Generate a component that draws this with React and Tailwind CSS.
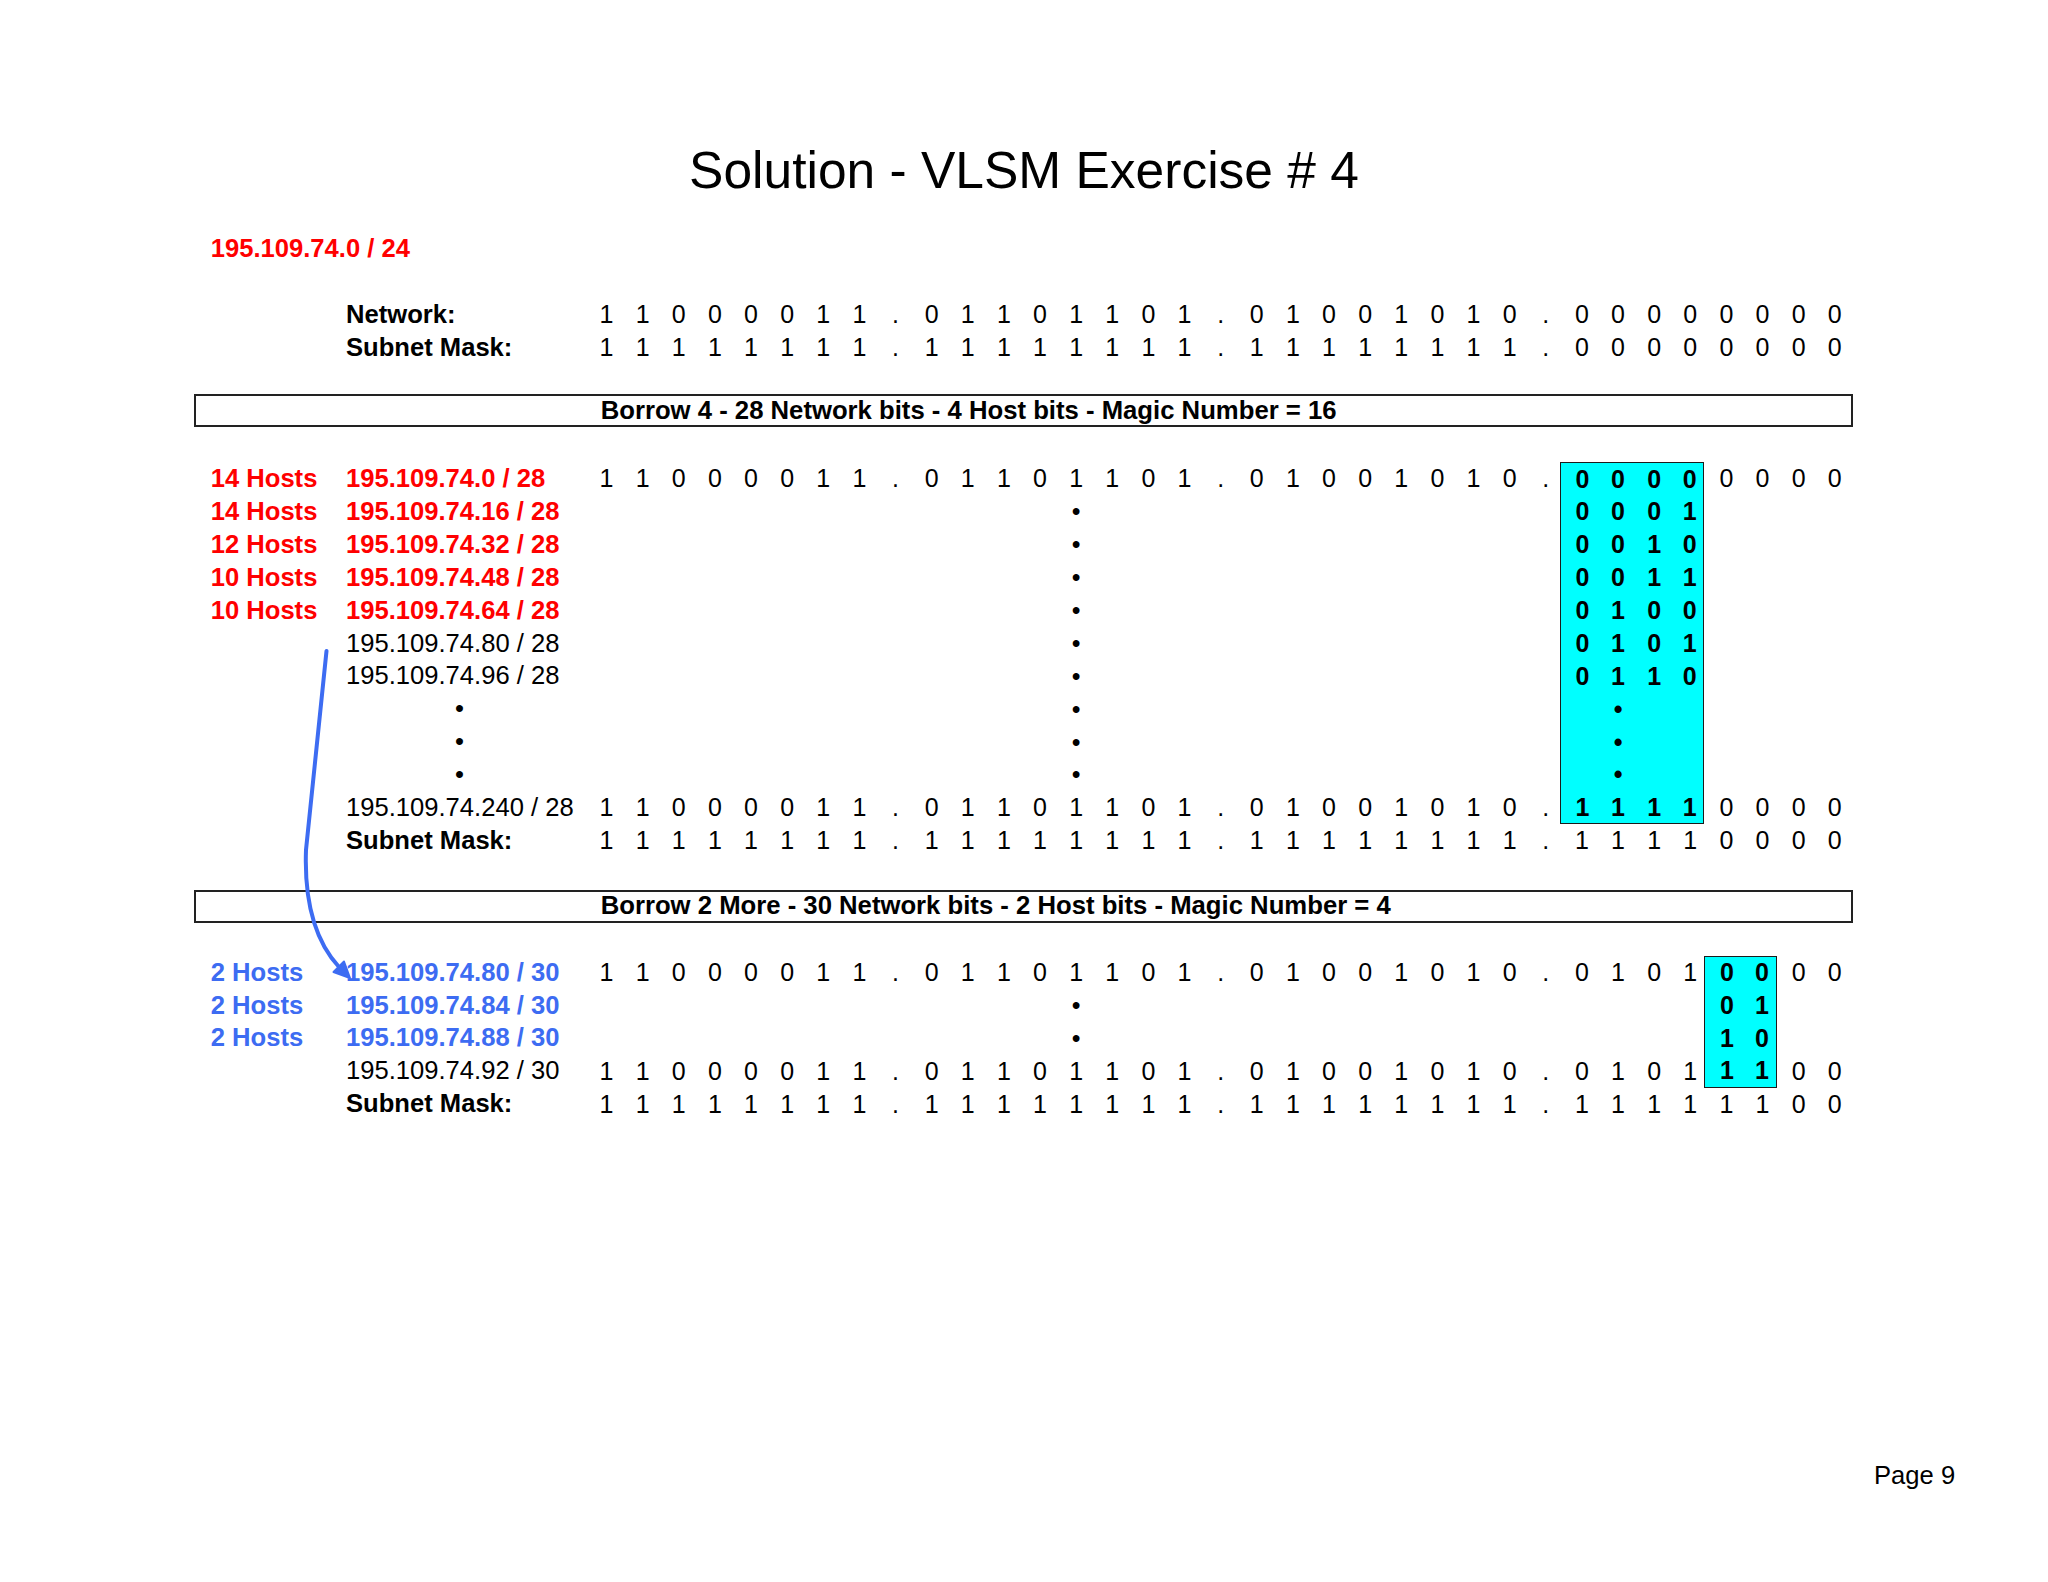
import React from 'react';
import clsx from 'clsx';

const RED = 'text-[#ff0000]';
const BLUE = 'text-[#3d6cf2]';

function full(octets) {
  const cells = [];
  octets.forEach((o, i) => {
    for (const c of o) cells.push(c);
    if (i < 3) cells.push('.');
  });
  return cells;
}

function partial(start, pattern) {
  const cells = Array(35).fill('');
  cells[13] = '•';
  for (let k = 0; k < pattern.length; k++) cells[start + k] = pattern[k];
  return cells;
}

function Row({ hosts, hostsClass, addr, addrClass, cells, box, r }) {
  return (
    <div className="flex h-[32.9px] items-center pl-[210.7px] leading-none">
      <div className={clsx('w-[135.3px] font-bold whitespace-nowrap', hostsClass)}>{hosts}</div>
      <div className={clsx('w-[238.5px] whitespace-nowrap', addrClass)}>{addr}</div>
      <div className="grid h-full grid-cols-[repeat(35,36.13px)] text-[25px]">
        {cells.map((c, i) => {
          const inBox = box && i >= box.c0 && i <= box.c1 && r >= box.r0 && r <= box.r1;
          return (
            <div
              key={i}
              className={clsx(
                'flex h-full items-center justify-center pl-2',
                inBox && 'bg-[#00ffff] font-bold border-[#1c1c1c]',
                inBox && i === box.c0 && 'border-l-[1.5px]',
                inBox && i === box.c1 && 'border-r-[1.5px]',
                inBox && r === box.r0 && 'border-t-[1.5px]',
                inBox && r === box.r1 && 'border-b-[1.5px]'
              )}
            >
              {c}
            </div>
          );
        })}
      </div>
    </div>
  );
}

function Banner({ text, className }) {
  return (
    <div
      className={clsx(
        'ml-[194px] flex h-[33px] w-[1659px] items-center border-2 border-[#222] pl-[404.7px] text-[25.7px] font-bold leading-none',
        className
      )}
    >
      {text}
    </div>
  );
}

const BOX2 = { c0: 27, c1: 30, r0: 0, r1: 10 };
const BOX3 = { c0: 31, c1: 32, r0: 0, r1: 3 };

const base = ['11000011', '01101101', '01001010'];
const mask = ['11111111', '11111111', '11111111'];

const sec2 = [
  { hosts: '14 Hosts', hostsClass: RED, addr: '195.109.74.0 / 28', addrClass: clsx('font-bold', RED), cells: full([...base, '00000000']) },
  { hosts: '14 Hosts', hostsClass: RED, addr: '195.109.74.16 / 28', addrClass: clsx('font-bold', RED), cells: partial(27, '0001') },
  { hosts: '12 Hosts', hostsClass: RED, addr: '195.109.74.32 / 28', addrClass: clsx('font-bold', RED), cells: partial(27, '0010') },
  { hosts: '10 Hosts', hostsClass: RED, addr: '195.109.74.48 / 28', addrClass: clsx('font-bold', RED), cells: partial(27, '0011') },
  { hosts: '10 Hosts', hostsClass: RED, addr: '195.109.74.64 / 28', addrClass: clsx('font-bold', RED), cells: partial(27, '0100') },
  { hosts: '', addr: '195.109.74.80 / 28', cells: partial(27, '0101') },
  { hosts: '', addr: '195.109.74.96 / 28', cells: partial(27, '0110') },
  { hosts: '', addr: '•', addrClass: 'pl-[109px]', cells: partial(28, '•') },
  { hosts: '', addr: '•', addrClass: 'pl-[109px]', cells: partial(28, '•') },
  { hosts: '', addr: '•', addrClass: 'pl-[109px]', cells: partial(28, '•') },
  { hosts: '', addr: '195.109.74.240 / 28', cells: full([...base, '11110000']) },
  { hosts: '', addr: 'Subnet Mask:', addrClass: 'font-bold', cells: full([...mask, '11110000']) },
];

const sec3 = [
  { hosts: '2 Hosts', hostsClass: BLUE, addr: '195.109.74.80 / 30', addrClass: clsx('font-bold', BLUE), cells: full([...base, '01010000']) },
  { hosts: '2 Hosts', hostsClass: BLUE, addr: '195.109.74.84 / 30', addrClass: clsx('font-bold', BLUE), cells: partial(31, '01') },
  { hosts: '2 Hosts', hostsClass: BLUE, addr: '195.109.74.88 / 30', addrClass: clsx('font-bold', BLUE), cells: partial(31, '10') },
  { hosts: '', addr: '195.109.74.92 / 30', cells: full([...base, '01011100']) },
  { hosts: '', addr: 'Subnet Mask:', addrClass: 'font-bold', cells: full([...mask, '11111100']) },
];

export default function App() {
  return (
    <div className="relative h-[1582px] w-[2048px] overflow-hidden bg-white font-['Liberation_Sans',Arial,sans-serif] text-[25.6px] text-black">
      <div className="pt-[143.5px]">
        <h1 className="h-[52px] text-center text-[51.5px] leading-[52px] font-normal">
          Solution - VLSM Exercise # 4
        </h1>
      </div>

      <div className={clsx('mt-[36.5px] flex h-[33px] items-center pl-[210.7px] font-bold leading-none', RED)}>
        195.109.74.0 / 24
      </div>

      <div className="mt-[33px]">
        <Row hosts="" addr="Network:" addrClass="font-bold" cells={full([...base, '00000000'])} r={0} />
        <Row hosts="" addr="Subnet Mask:" addrClass="font-bold" cells={full([...mask, '00000000'])} r={1} />
      </div>

      <Banner className="mt-[30.7px]" text="Borrow 4 - 28 Network bits - 4 Host bits - Magic Number = 16" />

      <div className="mt-[35px]">
        {sec2.map((row, r) => (
          <Row key={r} {...row} box={BOX2} r={r} />
        ))}
      </div>

      <Banner className="mt-[32.7px]" text="Borrow 2 More - 30 Network bits - 2 Host bits - Magic Number = 4" />

      <div className="mt-[33.2px]">
        {sec3.map((row, r) => (
          <Row key={r} {...row} box={BOX3} r={r} />
        ))}
      </div>

      <div className="mt-[338.5px] flex h-[33px] items-center pl-[1874px] leading-none">Page 9</div>

      <svg
        className="pointer-events-none absolute left-0 top-0 h-[1582px] w-[2048px]"
        viewBox="0 0 2048 1582"
        fill="none"
      >
        <path
          d="M 326.5 651 L 306 850 C 304 905, 316 942, 339 967"
          stroke="#3d6cf2"
          strokeWidth="4"
          strokeLinecap="round"
        />
        <polygon points="350,978 333.5,972 344,961.5" fill="#3d6cf2" stroke="#3d6cf2" strokeWidth="2" strokeLinejoin="round" />
      </svg>
    </div>
  );
}
